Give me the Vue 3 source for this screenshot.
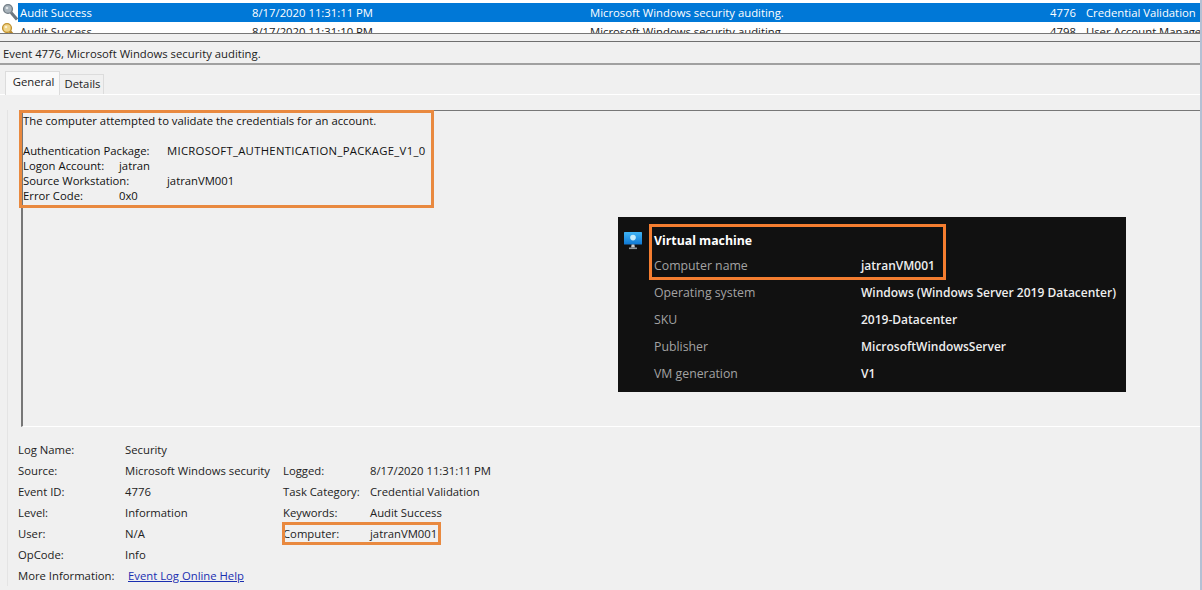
<script setup>
const vmRows = [
  { label: 'Operating system', value: 'Windows (Windows Server 2019 Datacenter)' },
  { label: 'SKU', value: '2019-Datacenter' },
  { label: 'Publisher', value: 'MicrosoftWindowsServer' },
  { label: 'VM generation', value: 'V1' }
]

const details = [
  ['Log Name:', 'Security', '', ''],
  ['Source:', 'Microsoft Windows security', 'Logged:', '8/17/2020 11:31:11 PM'],
  ['Event ID:', '4776', 'Task Category:', 'Credential Validation'],
  ['Level:', 'Information', 'Keywords:', 'Audit Success'],
  ['User:', 'N/A', 'Computer:', 'jatranVM001'],
  ['OpCode:', 'Info', '', '']
]

const messageStart = 'The computer attempted to validate the credentials for an account.\n\nAuthentication Package:\t'
const messageEnd = '\nLogon Account:\tjatran\nSource Workstation:\tjatranVM001\nError Code:\t0x0'
</script>

<template>
  <div class="page">
    <div class="event-list">
      <div class="row selected">
        <svg class="row-icon" viewBox="0 0 16 19">
          <path d="M9 9.5l6 7" stroke="#6c7780" stroke-width="3" />
          <circle cx="6" cy="6" r="4.4" fill="#a9b3bb" stroke="#737e87" stroke-width="1.4" />
          <circle cx="5" cy="5" r="1.3" fill="#dfe4e8" />
        </svg>
        <div class="cells">
          <span class="c-level">Audit Success</span>
          <span class="c-date">8/17/2020 11:31:11 PM</span>
          <span class="c-source">Microsoft Windows security auditing.</span>
          <span class="c-id">4776</span>
          <span class="c-cat">Credential Validation</span>
        </div>
      </div>
      <div class="row">
        <svg class="row-icon" viewBox="0 0 16 19">
          <path d="M8 9.5l6 7" stroke="#b5862c" stroke-width="3" />
          <circle cx="5" cy="6" r="4.4" fill="#f0d488" stroke="#c2932f" stroke-width="1.4" />
          <circle cx="4" cy="5" r="1.3" fill="#fbf0cf" />
        </svg>
        <div class="cells">
          <span class="c-level">Audit Success</span>
          <span class="c-date">8/17/2020 11:31:10 PM</span>
          <span class="c-source">Microsoft Windows security auditing.</span>
          <span class="c-id">4798</span>
          <span class="c-cat">User Account Management</span>
        </div>
      </div>
    </div>

    <div class="event-title">Event 4776, Microsoft Windows security auditing.</div>

    <div class="tabs">
      <div class="tab active">General</div>
      <div class="tab">Details</div>
    </div>

    <div class="tab-body">
      <div class="message">
        <div class="message-text">{{ messageStart }}<span class="package">MICROSOFT_AUTHENTICATION_PACKAGE_V1_0</span>{{ messageEnd }}</div>
        <div class="mark mark-message"></div>
      </div>

      <div class="details">
        <template v-for="row in details" :key="row[0]">
          <span>{{ row[0] }}</span>
          <span>{{ row[1] }}</span>
          <span>{{ row[2] }}</span>
          <span>{{ row[3] }}</span>
        </template>
        <span>More Information:</span>
        <a class="help-link" href="#">Event Log Online Help</a>
        <div class="mark mark-computer"></div>
      </div>
    </div>

    <div class="vm-card">
      <svg class="vm-icon" viewBox="0 0 18 18">
        <defs>
          <linearGradient id="screen" x1="0" y1="0" x2="0" y2="1">
            <stop offset="0" stop-color="#3fb4f5" />
            <stop offset="1" stop-color="#0f78d4" />
          </linearGradient>
        </defs>
        <rect x="0" y="0" width="18" height="12.5" rx="0.6" fill="url(#screen)" />
        <circle cx="9" cy="5.6" r="2.8" fill="#c5ecfb" />
        <path d="M7.6 12.5h2.8l.5 3h-3.8z" fill="#c9ced2" />
        <path d="M5 15.5h8v1.6H5z" fill="#8f979c" />
      </svg>
      <div class="vm-info">
        <div class="vm-title">Virtual machine</div>
        <div class="vm-row">
          <span class="vm-label">Computer name</span>
          <span class="vm-value">jatranVM001</span>
        </div>
        <div v-for="row in vmRows" :key="row.label" class="vm-row">
          <span class="vm-label">{{ row.label }}</span>
          <span class="vm-value">{{ row.value }}</span>
        </div>
      </div>
      <div class="mark mark-vm"></div>
    </div>
  </div>
</template>

<style>
body {
  margin: 0;
  background: #f0f0f0;
}
</style>

<style scoped>
.page {
  position: relative;
  width: 1202px;
  height: 590px;
  overflow: hidden;
  box-sizing: border-box;
  background: #f0f0f0;
  border-right: 2px solid #b4c0d4;
  font-family: "Open Sans", "Noto Sans", sans-serif;
  font-size: 11.3px;
  color: #222;
}

.event-list {
  height: 30px;
  padding-top: 3px;
  background: #fff;
  border-bottom: 1px solid #777;
  overflow: hidden;
}

.row {
  display: flex;
  height: 19px;
  align-items: center;
}

.row-icon {
  width: 16px;
  height: 19px;
  margin-left: 2px;
  flex: none;
}

.cells {
  flex: 1;
  display: grid;
  grid-template-columns: 232px 338px 460px 36px auto;
  align-items: center;
  height: 19px;
  padding-left: 2px;
  white-space: nowrap;
  overflow: hidden;
}

.selected .cells {
  background: #0078d7;
  color: #fff;
}

.event-title {
  margin-top: 7px;
  height: 21px;
  line-height: 23px;
  padding-left: 3px;
  border-top: 1px solid #6f6f6f;
  border-bottom: 2px solid #a0a0a0;
}

.tabs {
  display: flex;
  align-items: flex-end;
  height: 29px;
  padding-left: 5px;
  border-bottom: 1px solid #fff;
}

.tab {
  box-sizing: border-box;
  width: 44px;
  height: 20px;
  padding-left: 2px;
  line-height: 18px;
  text-align: center;
  background: #f0f0f0;
  border: 1px solid #dcdcdc;
  border-bottom: none;
  border-left: none;
}

.tab.active {
  width: 55px;
  height: 24px;
  line-height: 20px;
  margin-bottom: -1px;
  background: #f9f9f9;
  border-left: 1px solid #dcdcdc;
}

.tab-body {
  padding-left: 10px;
  border-left: 1px solid #e4e4e4;
  margin-left: 7px;
}

.message {
  position: relative;
  margin: 15px 0 0 3px;
  height: 315px;
  border-top: 1px solid #777;
  border-left: 2px solid #777;
  border-bottom: 1px solid #fff;
}

.message-text {
  padding-top: 2px;
  white-space: pre-wrap;
  tab-size: 48px;
  line-height: 15px;
  color: #111;
}

.package {
  letter-spacing: 0.3px;
}

.mark {
  position: absolute;
  box-sizing: border-box;
  border: 3px solid #e9893f;
  pointer-events: none;
}

.mark-message {
  left: -4px;
  top: -1px;
  width: 415px;
  height: 98px;
}

.details {
  position: relative;
  display: grid;
  grid-template-columns: 107px 158px 87px auto;
  grid-auto-rows: 21px;
  align-items: center;
  margin-top: 12px;
  white-space: nowrap;
}

.help-link {
  color: #1a2fb0;
  text-decoration: underline;
  margin-left: 3px;
}

.mark-computer {
  left: 264px;
  top: 83px;
  width: 159px;
  height: 23px;
}

.vm-card {
  position: absolute;
  left: 618px;
  top: 217px;
  width: 508px;
  height: 175px;
  box-sizing: border-box;
  display: flex;
  padding: 15px 0 0 6px;
  background: #111;
  color: #eee;
  font-size: 12.3px;
}

.vm-icon {
  width: 18px;
  height: 18px;
  flex: none;
}

.vm-info {
  margin-left: 12px;
  margin-top: -6px;
}

.vm-title {
  height: 26px;
  line-height: 29px;
  font-weight: 700;
  color: #fff;
}

.vm-row {
  display: flex;
  height: 27px;
  line-height: 27px;
}

.vm-label {
  width: 207px;
  color: #a3a3a3;
}

.vm-value {
  font-size: 12px;
  font-weight: 600;
  color: #eee;
  white-space: nowrap;
}

.mark-vm {
  left: 31px;
  top: 7px;
  width: 297px;
  height: 56px;
  border-color: #f47d30;
}
</style>
